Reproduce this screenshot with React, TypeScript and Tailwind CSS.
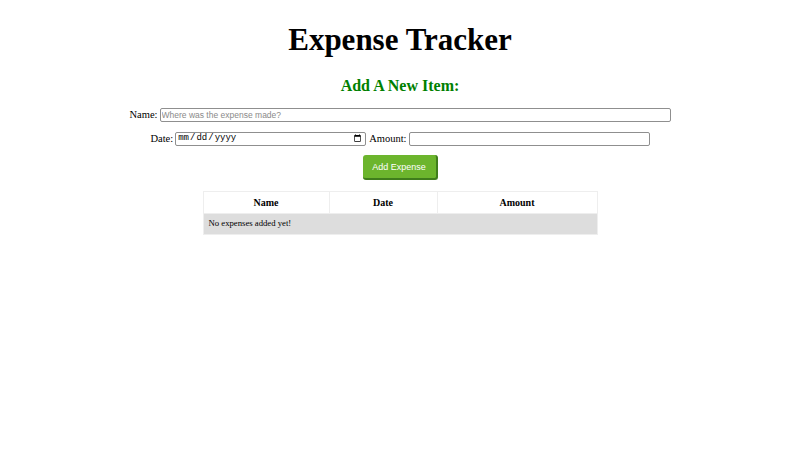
import React, { useState } from "react";

interface Expense {
  id: number;
  name: string;
  date: string;
  amount: string;
}

const serif = "font-['Liberation_Serif',serif]";

export default function App() {
  const [expenses, setExpenses] = useState<Expense[]>([]);
  const [name, setName] = useState("");
  const [date, setDate] = useState("");
  const [amount, setAmount] = useState("");

  const addExpense = () => {
    if (!name.trim() || !date || !amount) return;
    setExpenses((prev) => [...prev, { id: Date.now(), name, date, amount }]);
    setName("");
    setDate("");
    setAmount("");
  };

  return (
    <div className={`min-h-[450px] bg-white text-black ${serif} flex flex-col items-center`}>
      <h1 className="mt-[21px] text-[31px] font-bold leading-[37px]">Expense Tracker</h1>
      <h2 className="mt-[18px] text-[16px] font-bold leading-[19px] text-[#008000]">
        Add A New Item:
      </h2>

      <div className="mt-[12px] flex items-center gap-[2px] text-[10.5px]">
        <label htmlFor="name">Name:</label>
        <input
          id="name"
          type="text"
          value={name}
          onChange={(e) => setName(e.target.value)}
          placeholder="Where was the expense made?"
          className="w-[511px] h-[14px] border border-[#8f8f8f] rounded-[2px] px-[1px] text-[8.5px] font-['Liberation_Sans',sans-serif] placeholder:text-[#8a8a8a] outline-none"
        />
      </div>

      <div className="mt-[8px] flex items-center gap-[2px] text-[10.5px]">
        <label htmlFor="date">Date:</label>
        <input
          id="date"
          type="date"
          value={date}
          onChange={(e) => setDate(e.target.value)}
          className="w-[191px] h-[14px] border border-[#8f8f8f] rounded-[2px] px-[1px] text-[9px] text-black font-['Liberation_Mono',monospace] outline-none"
        />
        <label htmlFor="amount" className="ml-[1px]">Amount:</label>
        <input
          id="amount"
          type="number"
          value={amount}
          onChange={(e) => setAmount(e.target.value)}
          className="w-[241px] h-[14px] border border-[#8f8f8f] rounded-[2px] px-[1px] text-[8.5px] font-['Liberation_Sans',sans-serif] outline-none"
        />
      </div>

      <button
        onClick={addExpense}
        className="mt-[8px] w-[75px] h-[25px] pt-[2px] leading-[12px] rounded-[3px] bg-[#6cb52d] border-r-[2px] border-b-[2px] border-[#3f7d1c] text-white text-[9px] font-['Liberation_Sans',sans-serif]"
      >
        Add Expense
      </button>

      <table className="mt-[11px] w-[395px] border-collapse text-[10px]">
        <thead>
          <tr className="h-[22px]">
            <th className="w-[126px] border border-[#eeeeee] font-bold">Name</th>
            <th className="w-[108px] border border-[#eeeeee] font-bold">Date</th>
            <th className="border border-[#eeeeee] font-bold">Amount</th>
          </tr>
        </thead>
        <tbody>
          {expenses.length === 0 ? (
            <tr className="h-[21px] bg-[#dddddd]">
              <td colSpan={3} className="px-[5px] text-left text-[8.7px] border border-[#eeeeee]">
                No expenses added yet!
              </td>
            </tr>
          ) : (
            expenses.map((ex) => (
              <tr key={ex.id} className="h-[21px] bg-[#dddddd]">
                <td className="px-[5px] border border-[#eeeeee]">{ex.name}</td>
                <td className="px-[5px] border border-[#eeeeee]">{ex.date}</td>
                <td className="px-[5px] border border-[#eeeeee]">${ex.amount}</td>
              </tr>
            ))
          )}
        </tbody>
      </table>
    </div>
  );
}
